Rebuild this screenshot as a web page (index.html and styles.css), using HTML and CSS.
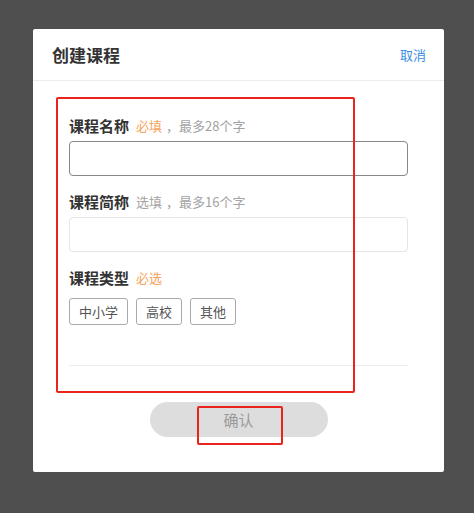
FILE: index.html
```html
<!DOCTYPE html>
<html lang="zh-CN">
<head>
<meta charset="utf-8">
<title>创建课程</title>
<link rel="stylesheet" href="styles.css">
</head>
<body>
<div class="dialog">
  <div class="header">
    <div class="title">创建课程</div>
    <div class="cancel">取消</div>
  </div>
  <div class="form">
    <div class="label"><span class="name">课程名称</span><span class="req">必填</span><span class="hint">，最多28个字</span></div>
    <input class="field focused" type="text">
    <div class="label gap"><span class="name">课程简称</span><span class="hint opt">选填</span><span class="hint">，最多16个字</span></div>
    <input class="field" type="text">
    <div class="label gap"><span class="name">课程类型</span><span class="req">必选</span></div>
    <div class="tags">
      <span class="tag">中小学</span>
      <span class="tag">高校</span>
      <span class="tag">其他</span>
    </div>
    <div class="divider"></div>
  </div>
  <div class="footer">
    <div class="confirm">确认</div>
  </div>
  <div class="mark mark-form"></div>
  <div class="mark mark-btn"></div>
</div>
</body>
</html>
```

FILE: styles.css
```css
html, body {
  margin: 0;
  padding: 0;
  background: #4f4f4f;
  height: 100%;
}
body {
  font-family: "Noto Sans CJK SC", "Noto Sans", sans-serif;
  padding-top: 29px;
  box-sizing: border-box;
}
.dialog {
  position: relative;
  margin-left: 33px;
  width: 411px;
  height: 443px;
  background: #fff;
  border-radius: 2px;
}
.header {
  height: 51px;
  border-bottom: 1px solid #ececec;
  display: flex;
  align-items: center;
  justify-content: space-between;
  padding: 0 18px 0 19px;
}
.title {
  font-size: 17px;
  font-weight: bold;
  color: #333;
}
.cancel {
  font-size: 13px;
  color: #3b8ee3;
}
.form {
  padding: 34px 36px 0 36px;
  display: flex;
  flex-direction: column;
}
.label {
  height: 20px;
  display: flex;
  align-items: center;
  white-space: nowrap;
}
.label.gap {
  margin-top: 15px;
}
.name {
  font-size: 15px;
  font-weight: bold;
  color: #333;
  margin-right: 7px;
}
.req {
  font-size: 13px;
  color: #f7a25c;
  margin-right: 4px;
}
.hint {
  font-size: 13px;
  color: #a3a3a3;
}
.hint.opt {
  margin-right: 4px;
}
.field {
  display: block;
  box-sizing: border-box;
  width: 100%;
  height: 35px;
  margin: 6px 0 0 0;
  border: 1px solid #e6e6e6;
  border-radius: 4px;
  background: #fff;
  outline: none;
  padding: 0 8px;
}
.field.focused {
  border-color: #888;
}
.tags {
  display: flex;
  gap: 8px;
  margin-top: 11px;
}
.tag {
  box-sizing: border-box;
  height: 27px;
  padding: 0 9px;
  border: 1px solid #aaa;
  border-radius: 3px;
  font-size: 13px;
  color: #555;
  display: flex;
  align-items: center;
}
.divider {
  height: 1px;
  background: #ededed;
  margin-top: 40px;
}
.footer {
  display: flex;
  justify-content: center;
  padding-top: 36px;
}
.confirm {
  width: 178px;
  height: 35px;
  border-radius: 18px;
  background: #dddddd;
  color: #9a9a9a;
  font-size: 15px;
  display: flex;
  align-items: center;
  justify-content: center;
}
.mark {
  position: absolute;
  border: 2px solid #e8241c;
  border-radius: 2px;
  box-sizing: border-box;
}
.mark-form {
  left: 23px;
  top: 68px;
  width: 299px;
  height: 296px;
}
.mark-btn {
  left: 164px;
  top: 377px;
  width: 86px;
  height: 39px;
}
```
